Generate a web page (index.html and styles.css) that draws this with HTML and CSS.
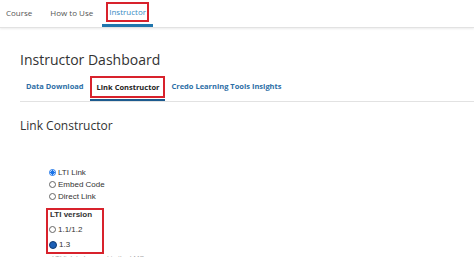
FILE: index.html
```html
<!DOCTYPE html>
<html>
<head>
<meta charset="utf-8">
<link rel="stylesheet" href="styles.css">
</head>
<body>
<nav class="topnav">
  <a class="nav-item">Course</a>
  <a class="nav-item">How to Use</a>
  <a class="nav-item active"><span class="hl">Instructor</span></a>
</nav>
<main class="main">
  <h1 class="title">Instructor Dashboard</h1>
  <div class="tabs">
    <a class="tab">Data Download</a>
    <a class="tab active"><span class="hl tab-hl">Link Constructor</span></a>
    <a class="tab">Credo Learning Tools Insights</a>
  </div>
  <h2 class="subtitle">Link Constructor</h2>
  <div class="form">
    <div class="radios">
      <label class="radio"><span class="dot checked"></span>LTI Link</label>
      <label class="radio"><span class="dot"></span>Embed Code</label>
      <label class="radio"><span class="dot"></span>Direct Link</label>
    </div>
    <fieldset class="version">
      <div class="legend">LTI version</div>
      <label class="radio v"><span class="dot"></span>1.1/1.2</label>
      <label class="radio v"><span class="dot dark"></span>1.3</label>
    </fieldset>
    <p class="hint">LTI link to be used in the LMS</p>
  </div>
</main>
</body>
</html>
```
FILE: styles.css
```css
* { box-sizing: border-box; }
html, body { margin: 0; padding: 0; background: #fff; }
body { font-family: "Open Sans", "Liberation Sans", sans-serif; color: #333; overflow: hidden; height: 257px; }

.topnav {
  display: flex;
  align-items: flex-end;
  gap: 6px;
  height: 28px;
  border-bottom: 1px solid #e2e2e2;
  box-shadow: 0 1px 2px rgba(0,0,0,0.08);
}
.nav-item {
  display: flex;
  align-items: center;
  height: 27px;
  padding: 0 6px 3px;
  font-size: 8px;
  color: #555;
}
.nav-item.active {
  margin-left: -3px;
  padding: 0 4px 1px;
  border-bottom: 3px solid #2176ad;
  color: #3a8cc4;
}
.hl {
  display: inline-block;
  border: 2px solid #d8222c;
  padding: 3px 1px 3px 1px;
  line-height: 10px;
}

.main { padding: 0 0 0 20px; }
.title {
  margin: 22px 0 0;
  font-size: 14px;
  font-weight: 400;
  line-height: 20px;
  color: #333;
}
.tabs {
  display: flex;
  align-items: flex-end;
  gap: 1px;
  margin-top: 5px;
  height: 27px;
  border-bottom: 1px solid #e2e2e2;
}
.tab {
  display: flex;
  align-items: center;
  height: 26px;
  padding: 0 6px 4px;
  font-size: 7.5px;
  font-weight: 700;
  color: #2c6ea6;
}
.tab.active {
  padding: 0;
  border-bottom: 2px solid #1c5a8e;
  color: #222;
  margin: 0 -1px 0 -1px;
}
.tab-hl { padding: 4px 4px 4px 5px; }

.subtitle {
  margin: 16px 0 0;
  font-size: 12px;
  font-weight: 400;
  line-height: 16px;
  color: #333;
}
.form {
  padding-left: 29px;
  margin-top: 32px;
  font-family: "Liberation Sans", Arial, sans-serif;
  font-size: 8px;
  color: #333;
}
.radios { display: flex; flex-direction: column; }
.radio {
  display: flex;
  align-items: center;
  gap: 2px;
  height: 12px;
}
.dot {
  width: 7px;
  height: 7px;
  border-radius: 50%;
  border: 1px solid #666;
  background: #fff;
}
.dot.checked {
  border: 1px solid #1a73e8;
  background: radial-gradient(circle, #1a73e8 0 2px, #fff 2.1px);
}
.dot.dark {
  width: 8px;
  height: 8px;
  border: 1px solid #103a70;
  background: #1d5fb5;
}
.version {
  margin: 6px 0 0 -3px;
  padding: 0 2px 0 1px;
  width: 58px;
  border: 2px solid #d8222c;
}
.legend {
  font-weight: 700;
  height: 9px;
  line-height: 9px;
  margin: 0 0 3px 1px;
}
.radio.v { height: 15px; }
.hint {
  margin: 1px 0 0 3px;
  font-size: 7px;
  color: #aaa;
}
```
